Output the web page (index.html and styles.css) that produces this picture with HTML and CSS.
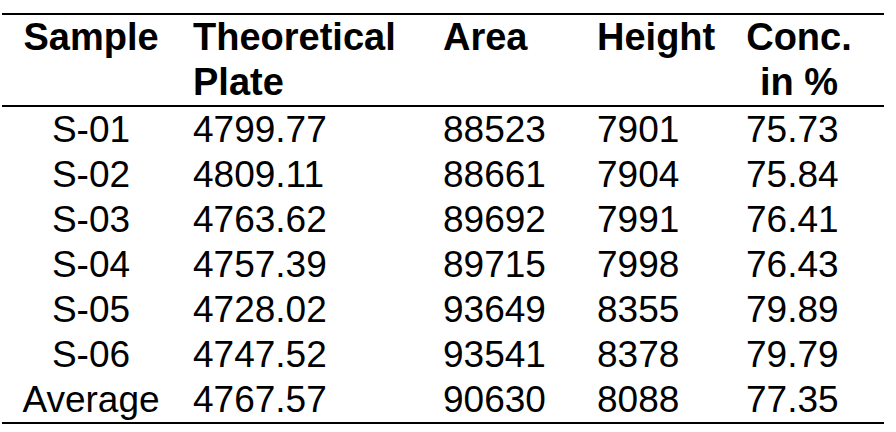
FILE: index.html
```html
<!DOCTYPE html>
<html lang="en">
<head>
    <meta charset="UTF-8">
    <meta name="viewport" content="width=device-width, initial-scale=1.0">
    <title>System Suitability</title>
    <link rel="stylesheet" href="styles.css">
</head>
<body>
    <table class="results">
        <colgroup>
            <col class="col-sample">
            <col class="col-plate">
            <col class="col-area">
            <col class="col-height">
            <col class="col-conc">
        </colgroup>
        <thead>
            <tr>
                <th class="sample">Sample</th>
                <th>Theoretical Plate</th>
                <th>Area</th>
                <th>Height</th>
                <th class="conc">Conc. in %</th>
            </tr>
        </thead>
        <tbody>
            <tr><td class="sample">S-01</td><td>4799.77</td><td>88523</td><td>7901</td><td>75.73</td></tr>
            <tr><td class="sample">S-02</td><td>4809.11</td><td>88661</td><td>7904</td><td>75.84</td></tr>
            <tr><td class="sample">S-03</td><td>4763.62</td><td>89692</td><td>7991</td><td>76.41</td></tr>
            <tr><td class="sample">S-04</td><td>4757.39</td><td>89715</td><td>7998</td><td>76.43</td></tr>
            <tr><td class="sample">S-05</td><td>4728.02</td><td>93649</td><td>8355</td><td>79.89</td></tr>
            <tr><td class="sample">S-06</td><td>4747.52</td><td>93541</td><td>8378</td><td>79.79</td></tr>
            <tr><td class="sample">Average</td><td>4767.57</td><td>90630</td><td>8088</td><td>77.35</td></tr>
        </tbody>
    </table>
</body>
</html>
```

FILE: styles.css
```css
body {
    margin: 0;
    padding: 13px 12px 0 2px;
    background: #fff;
    color: #000;
    font-family: "Liberation Sans", Arial, sans-serif;
}
.results {
    width: 882px;
    table-layout: fixed;
    border-collapse: collapse;
    font-size: 37px;
    line-height: 45px;
}
.col-sample {
    width: 170px;
}
.col-plate {
    width: 250px;
}
.col-area {
    width: 154px;
}
.col-height {
    width: 149px;
}
.col-conc {
    width: 159px;
}
th, td {
    padding: 0 0 0 21px;
    text-align: left;
    vertical-align: top;
    white-space: nowrap;
}
th {
    font-size: 38px;
    font-weight: bold;
    white-space: normal;
    border-top: 2px solid #000;
    border-bottom: 2px solid #000;
}
.results .sample {
    padding-left: 8px;
    text-align: center;
}
.results .conc {
    text-align: center;
    padding-right: 32px;
}
tbody tr:last-child td {
    border-bottom: 2px solid #000;
}
```
